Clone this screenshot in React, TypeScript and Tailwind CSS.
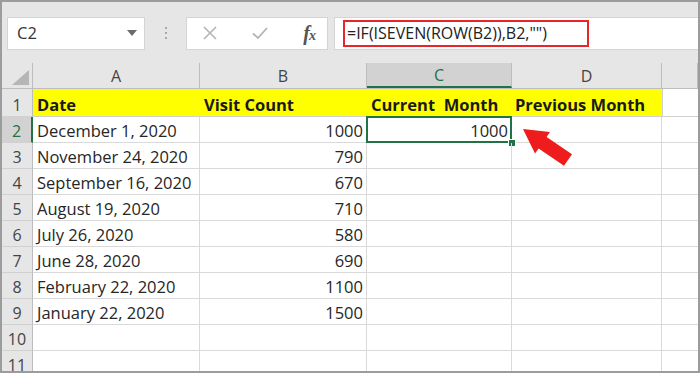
import React from "react";

const cols = [
  { key: "A", w: "w-[167px]" },
  { key: "B", w: "w-[167px]" },
  { key: "C", w: "w-[145px]" },
  { key: "D", w: "w-[150px]" },
  { key: "", w: "flex-1" },
];

const data: [string, string][] = [
  ["December 1, 2020", "1000"],
  ["November 24, 2020", "790"],
  ["September 16, 2020", "670"],
  ["August 19, 2020", "710"],
  ["July 26, 2020", "580"],
  ["June 28, 2020", "690"],
  ["February 22, 2020", "1100"],
  ["January 22, 2020", "1500"],
];

function RowHead({ n, active, h }: { n: number; active?: boolean; h: string }) {
  return (
    <div
      className={`w-[31px] ${h} shrink-0 flex items-end justify-center pb-[1px] border-b border-[#d0d0d0] text-[16px] ${
        active
          ? "bg-[#d2d2d2] text-[#217346] border-r-2 border-r-[#217346]"
          : "bg-[#e6e6e6] text-[#444] border-r border-r-[#bdbdbd]"
      }`}
    >
      {n}
    </div>
  );
}

export default function App() {
  return (
    <div
      className="relative w-[700px] h-[373px] overflow-hidden border-2 border-[#9c9c9c] bg-[#e6e6e6] text-[16.5px] leading-[20px]"
      style={{ fontFamily: '"Open Sans", "Noto Sans", sans-serif' }}
    >
      {/* formula bar */}
      <div className="flex items-center h-[61px] pl-[5px] pb-[5px] pt-[6px]">
        <div className="w-[138px] h-[33px] bg-white border border-[#d4d4d4] flex items-center justify-between pl-[9px] pr-[7px]">
          <span className="text-[16.5px] text-[#333]">C2</span>
          <svg width="10" height="6" viewBox="0 0 10 6">
            <path d="M0 0 L10 0 L5 6 Z" fill="#6b6b6b" />
          </svg>
        </div>
        <div className="w-[41px] flex flex-col items-center gap-[3px]">
          <span className="w-[2px] h-[2px] bg-[#a8a8a8]" />
          <span className="w-[2px] h-[2px] bg-[#a8a8a8]" />
          <span className="w-[2px] h-[2px] bg-[#a8a8a8]" />
        </div>
        <div className="w-[142px] h-[33px] bg-white border border-[#d4d4d4] flex items-center pl-[16px] pr-[12px] justify-between">
          <svg width="14" height="14" viewBox="0 0 14 14">
            <path d="M1 1 L13 13 M13 1 L1 13" stroke="#b4b4b4" strokeWidth="1.6" />
          </svg>
          <svg width="16" height="14" viewBox="0 0 16 14">
            <path d="M1 7.5 L6 12 L15 2" stroke="#b4b4b4" strokeWidth="1.8" fill="none" />
          </svg>
          <span
            className="italic font-bold text-[#555] text-[20px] leading-none tracking-[-1px]"
            style={{ fontFamily: '"Liberation Serif", serif' }}
          >
            f<span className="text-[14px]">x</span>
          </span>
        </div>
        <div className="ml-[6px] flex-1 h-[33px] bg-white border-y border-l border-[#d4d4d4] flex items-center pl-[8px]">
          <div className="h-[27px] w-[246px] border-2 border-[#e8262a] flex items-center pl-[2px] text-[16px] text-[#222]">
            =IF(ISEVEN(ROW(B2)),B2,"")
          </div>
        </div>
      </div>

      {/* column headers */}
      <div className="flex h-[26px] border-b border-[#bdbdbd] text-[#444] text-[16px]">
        <div className="w-[31px] shrink-0 border-r border-[#bdbdbd] flex items-end justify-end p-[3px]">
          <svg width="17" height="15" viewBox="0 0 17 15">
            <path d="M17 0 L17 15 L0 15 Z" fill="#b6b6b6" />
          </svg>
        </div>
        {cols.map((c, i) => (
          <div
            key={i}
            className={`${c.w} shrink-0 flex items-center justify-center ${
              c.key === "C"
                ? "bg-[#d2d2d2] text-[#217346] border-b-2 border-[#217346] border-r border-r-[#bdbdbd]"
                : "border-r border-[#bdbdbd]"
            }`}
          >
            {c.key}
          </div>
        ))}
      </div>

      {/* row 1 */}
      <div className="flex h-[28px] bg-white">
        <RowHead n={1} h="h-[28px]" />
        <div className="flex-1 flex bg-[#ffff00] font-bold text-[#1a1a1a] border-b border-[#d0d0d0]">
          <div className="w-[167px] flex items-end pl-[4px] pb-[1px]">Date</div>
          <div className="w-[167px] flex items-end pl-[4px] pb-[1px]">Visit Count</div>
          <div className="w-[145px] flex items-end pl-[4px] pb-[1px] whitespace-pre">Current  Month</div>
          <div className="w-[150px] flex items-end pl-[3px] pb-[1px] whitespace-nowrap">Previous Month</div>
        </div>
        <div className="w-[36px] bg-white border-b border-l border-[#d0d0d0]" />
      </div>

      {/* data rows */}
      {Array.from({ length: 10 }).map((_, i) => {
        const n = i + 2;
        const row = data[i];
        return (
          <div key={n} className="flex h-[26px] bg-white text-[#262626]">
            <RowHead n={n} active={n === 2} h="h-[26px]" />
            <div className="w-[167px] shrink-0 border-r border-b border-[#d9d9d9] flex items-end pl-[4px] pb-[1px] whitespace-nowrap">
              {row ? row[0] : ""}
            </div>
            <div className="w-[167px] shrink-0 border-r border-b border-[#d9d9d9] flex items-end justify-end pr-[3px] pb-[1px]">
              {row ? row[1] : ""}
            </div>
            <div className="relative w-[145px] shrink-0 border-r border-b border-[#d9d9d9] flex items-end justify-end pr-[3px] pb-[1px]">
              {n === 2 && (
                <>
                  1000
                  <div className="absolute -left-[1px] -top-[1px] -right-[1px] -bottom-[1px] border-2 border-[#217346]" />
                  <div className="absolute -right-[5px] -bottom-[5px] w-[8px] h-[8px] bg-[#217346] border border-white" />
                </>
              )}
            </div>
            <div className="w-[150px] shrink-0 border-r border-b border-[#d9d9d9]" />
            <div className="flex-1 border-b border-[#d9d9d9]" />
          </div>
        );
      })}

      {/* red arrow */}
      <svg
        className="absolute left-[-2px] top-[-2px] pointer-events-none"
        width="700"
        height="373"
        viewBox="0 0 700 373"
      >
        <polygon
          points="523,129 550,132 546.6,137.1 572,154.3 564,165.7 538.6,148.5 535,153.4"
          fill="#ee1c1c"
        />
      </svg>
    </div>
  );
}
